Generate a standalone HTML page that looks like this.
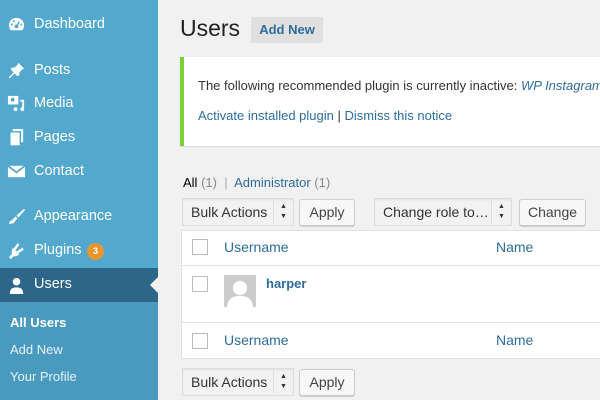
<!DOCTYPE html>
<html><head><style>
*{margin:0;padding:0;box-sizing:border-box}
body{width:600px;height:400px;overflow:hidden;background:#f1f1f1;font-family:"Liberation Sans",sans-serif;font-size:13.5px;position:relative;color:#333}
#sb{position:absolute;left:0;top:0;width:158px;height:400px;background:#52a8cd}
.mi{position:absolute;left:34px;color:#fff;font-size:14.5px}
.ic{position:absolute;left:7px}
#act{position:absolute;left:0;top:268px;width:158px;height:34px;background:#2d6689}
#sub{position:absolute;left:0;top:302px;width:158px;height:98px;background:#4a9ac0}
.si{position:absolute;left:10px;color:#fff;font-size:13px}
.a{color:#2e6d9b}
.abs{position:absolute}
.btn{position:absolute;border:1px solid #ccc;background:#f7f7f7;border-radius:3px;height:27px;line-height:25px;text-align:center;color:#444;font-size:14px;box-shadow:0 1px 0 #ccc}
.sel{position:absolute;border:1px solid #ddd;background:#f2f2f2;height:28px;line-height:26px;padding-left:8px;color:#333;font-size:14px;box-shadow:inset 0 1px 2px rgba(0,0,0,.07)}
.sel i{position:absolute;right:0;top:2px;width:20px;height:22px;border-left:1px solid #ddd;font-style:normal;font-size:7px;line-height:10px;text-align:center;padding-top:1px}
.cb{position:absolute;left:192px;width:16px;height:16px;border:1px solid #bbb;background:#fff}
</style></head><body>
<div id="sb">
<svg class="ic" style="top:15px" width="19" height="19" viewBox="0 0 20 20"><path d="M10 3a8 8 0 0 0-8 8c0 2 .7 3.5 2 5h12c1.3-1.5 2-3 2-5a8 8 0 0 0-8-8z" fill="#fff"/><circle cx="10" cy="12" r="2" fill="#52a8cd"/><path d="M10 12l3-5" stroke="#52a8cd" stroke-width="1.5"/><circle cx="5" cy="10" r="1" fill="#52a8cd"/><circle cx="15" cy="10" r="1" fill="#52a8cd"/><circle cx="7" cy="6.5" r="1" fill="#52a8cd"/></svg>
<div class="mi" style="top:16px">Dashboard</div>
<svg class="ic" style="top:61px" width="19" height="19" viewBox="0 0 20 20"><path d="M12 2l6 6-2 1-3 3 0 3-2 1-3-3-5 5-1 0 0-1 5-5-3-3 1-2 3 0 3-3z" fill="#fff"/></svg>
<div class="mi" style="top:62px">Posts</div>
<svg class="ic" style="top:94px" width="19" height="19" viewBox="0 0 20 20"><rect x="1" y="2" width="11" height="9" fill="#fff"/><circle cx="6" cy="6" r="2" fill="#52a8cd"/><path d="M14 6h4v10a2 2 0 1 1-2-2V8h-2z" fill="#fff"/><circle cx="9" cy="16" r="2" fill="#fff"/></svg>
<div class="mi" style="top:95px">Media</div>
<svg class="ic" style="top:128px" width="19" height="19" viewBox="0 0 20 20"><rect x="6" y="1" width="11" height="14" fill="#fff"/><rect x="3" y="4" width="11" height="15" fill="#fff" stroke="#52a8cd" stroke-width="1.5"/></svg>
<div class="mi" style="top:129px">Pages</div>
<svg class="ic" style="top:162px" width="19" height="19" viewBox="0 0 20 20"><rect x="1" y="4" width="18" height="12" fill="#fff"/><path d="M1 4l9 7 9-7" stroke="#52a8cd" stroke-width="1.8" fill="none"/></svg>
<div class="mi" style="top:163px">Contact</div>
<svg class="ic" style="top:207px" width="19" height="19" viewBox="0 0 20 20"><path d="M18 2l-8 7 2 2 7-8zM9 10l2 2-4 5-5 1 1-3 2-1z" fill="#fff"/></svg>
<div class="mi" style="top:208px">Appearance</div>
<svg class="ic" style="top:241px" width="19" height="19" viewBox="0 0 20 20"><path d="M12 3l-4 6M17 8l-6 4" stroke="#fff" stroke-width="2.5"/><path d="M6 7l7 7-3 2-3 0-3 3-2-2 3-3 0-3z" fill="#fff"/></svg>
<div class="mi" style="top:242px">Plugins</div>
<div class="abs" style="left:87px;top:243px;width:17px;height:17px;border-radius:50%;background:#e8952e;color:#fff;font-size:9px;font-weight:bold;text-align:center;line-height:17px">3</div>
<div id="act"></div>
<svg class="ic" style="top:276px" width="19" height="19" viewBox="0 0 20 20"><circle cx="10" cy="6" r="4" fill="#fff"/><path d="M3 19c0-5 2-7 7-7s7 2 7 7z" fill="#fff"/></svg>
<div class="mi" style="top:276px">Users</div>
<div class="abs" style="left:150px;top:277px;width:0;height:0;border-top:8px solid transparent;border-bottom:8px solid transparent;border-right:8px solid #f1f1f1"></div>
<div id="sub"></div>
<div class="si" style="top:315px;font-weight:bold">All Users</div>
<div class="si" style="top:342px;color:#e6f2f8">Add New</div>
<div class="si" style="top:369px;color:#e6f2f8">Your Profile</div>
</div>

<div class="abs" style="left:180px;top:15px;font-size:23px;color:#222">Users</div>
<div class="abs" style="left:251px;top:17px;width:72px;height:26px;background:#e0e0e0;color:#2e6d9b;font-weight:bold;font-size:13px;text-align:center;line-height:26px">Add New</div>

<div class="abs" style="left:180px;top:57px;width:430px;height:89px;background:#fff;border-left:4px solid #7ad03a;box-shadow:0 1px 1px rgba(0,0,0,.1)"></div>
<div class="abs" style="left:198px;top:78px;font-size:13px;color:#333;white-space:nowrap">The following recommended plugin is currently inactive: <i class="a">WP Instagram</i></div>
<div class="abs" style="left:198px;top:108px;font-size:13px;white-space:nowrap"><span class="a">Activate installed plugin</span> | <span class="a">Dismiss this notice</span></div>

<div class="abs" style="left:183px;top:175px;font-size:13px;color:#000">All <span style="color:#888">(1)</span> &nbsp;<span style="color:#aaa">|</span>&nbsp; <span class="a">Administrator</span> <span style="color:#888">(1)</span></div>

<div class="sel" style="left:182px;top:198px;width:112px">Bulk Actions<i>▲<br>▼</i></div>
<div class="btn" style="left:299px;top:199px;width:56px">Apply</div>
<div class="sel" style="left:374px;top:198px;width:138px">Change role to…<i>▲<br>▼</i></div>
<div class="btn" style="left:519px;top:199px;width:67px">Change</div>

<div class="abs" style="left:181px;top:230px;width:420px;height:129px;background:#fff;border:1px solid #e1e1e1"></div>
<div class="abs" style="left:181px;top:265px;width:420px;height:1px;background:#e1e1e1"></div>
<div class="abs" style="left:181px;top:322px;width:420px;height:1px;background:#e1e1e1"></div>
<div class="cb" style="top:239px"></div>
<div class="abs a" style="left:224px;top:239px;font-size:14px">Username</div>
<div class="abs a" style="left:496px;top:239px;font-size:14px">Name</div>
<div class="cb" style="top:276px"></div>
<svg class="abs" style="left:224px;top:275px" width="32" height="32" viewBox="0 0 32 32"><rect width="32" height="32" fill="#ccc"/><circle cx="16" cy="13" r="7" fill="#fff"/><path d="M3 32c1-9 6-11 13-11s12 2 13 11z" fill="#fff"/></svg>
<div class="abs a" style="left:266px;top:276px;font-size:13px;font-weight:bold">harper</div>
<div class="cb" style="top:333px"></div>
<div class="abs a" style="left:224px;top:332px;font-size:14px">Username</div>
<div class="abs a" style="left:496px;top:332px;font-size:14px">Name</div>

<div class="sel" style="left:182px;top:368px;width:112px">Bulk Actions<i>▲<br>▼</i></div>
<div class="btn" style="left:299px;top:369px;width:56px">Apply</div>
</body></html>
